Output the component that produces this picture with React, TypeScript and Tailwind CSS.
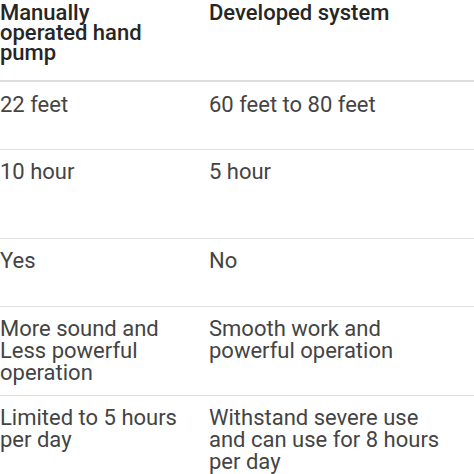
import React from "react";

const rows: { a: string; b: string; h: string; pt: string }[] = [
  { a: "22 feet", b: "60 feet to 80 feet", h: "h-[68px]", pt: "pt-[12px]" },
  { a: "10 hour", b: "5 hour", h: "h-[89px]", pt: "pt-[11px]" },
  { a: "Yes", b: "No", h: "h-[68px]", pt: "pt-[11px]" },
  { a: "More sound and Less powerful operation", b: "Smooth work and powerful operation", h: "h-[89px]", pt: "pt-[11px]" },
  { a: "Limited to 5 hours per day", b: "Withstand severe use and can use for 8 hours per day", h: "h-[90px]", pt: "pt-[11px]" },
];

export default function App() {
  return (
    <div className="w-[474px] h-[474px] overflow-hidden bg-white" style={{ fontFamily: "Roboto, 'Liberation Sans', sans-serif" }}>
      <div className="flex h-[82px] border-b-2 border-[#dcdcdc] text-[#262626] font-medium text-[22px] leading-[20px] pt-[3px]">
        <div className="w-[209px]"><div className="w-[160px]">Manually operated hand pump</div></div>
        <div className="w-[240px]">Developed system</div>
      </div>
      {rows.map((r, i) => (
        <div key={i} className={`flex ${r.h} ${r.pt} border-b border-[#e0e0e0] text-[#444] text-[22px] leading-[22px]`}>
          <div className="w-[209px]"><div className="w-[185px]">{r.a}</div></div>
          <div className="w-[240px]">{r.b}</div>
        </div>
      ))}
    </div>
  );
}
